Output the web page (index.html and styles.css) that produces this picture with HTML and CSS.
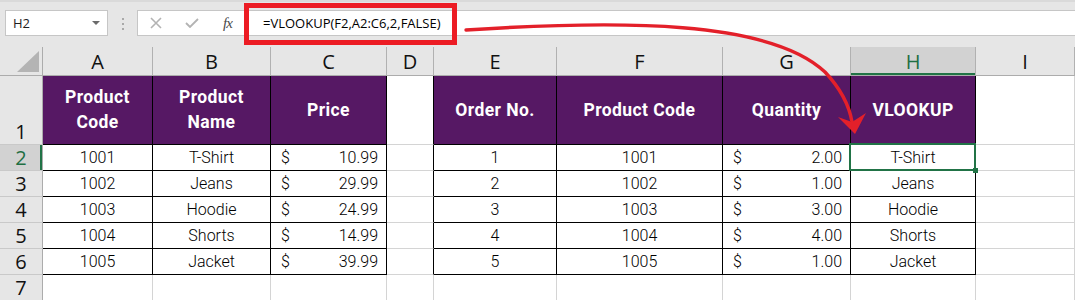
FILE: index.html
```html
<!DOCTYPE html>
<html lang="en">
<head>
<meta charset="utf-8">
<title>VLOOKUP example</title>
<link rel="stylesheet" href="styles.css">
</head>
<body>
<div class="app">
  <header class="toolbar">
    <div class="namebox">
      <span>H2</span>
      <svg class="caret" width="8" height="4" viewBox="0 0 8 4"><path d="M0 0H8L4 4Z" fill="#6b6b6b"/></svg>
    </div>
    <div class="grip"><i></i><i></i><i></i></div>
    <div class="fbar">
      <div class="fbtns">
        <svg class="ic-x" width="12" height="12" viewBox="0 0 12 12"><path d="M1 1L11 11M11 1L1 11" stroke="#b3b3b3" stroke-width="1.6" fill="none"/></svg>
        <svg class="ic-ok" width="14" height="10" viewBox="0 0 14 10"><path d="M1 5L5 9L13 1" stroke="#b3b3b3" stroke-width="1.8" fill="none"/></svg>
        <span class="fx">fx</span>
      </div>
      <div class="finput">=VLOOKUP(F2,A2:C6,2,FALSE)</div>
    </div>
  </header>

  <div class="sheet">
    <!-- column headers -->
    <div class="c corner"><span class="tri"></span></div>
    <div class="c ch">A</div>
    <div class="c ch">B</div>
    <div class="c ch">C</div>
    <div class="c ch">D</div>
    <div class="c ch">E</div>
    <div class="c ch">F</div>
    <div class="c ch">G</div>
    <div class="c ch sel-col">H</div>
    <div class="c ch">I</div>

    <!-- row 1 -->
    <div class="c rh r1">1</div>
    <div class="c hd">Product<br>Code</div>
    <div class="c hd">Product<br>Name</div>
    <div class="c hd">Price</div>
    <div class="c edge"></div>
    <div class="c hd">Order No.</div>
    <div class="c hd">Product Code</div>
    <div class="c hd">Quantity</div>
    <div class="c hd">VLOOKUP</div>
    <div class="c"></div>

    <!-- row 2 -->
    <div class="c rh sel-row">2</div>
    <div class="c d">1001</div>
    <div class="c d">T-Shirt</div>
    <div class="c d money"><span>$</span><span>10.99</span></div>
    <div class="c edge"></div>
    <div class="c d">1</div>
    <div class="c d">1001</div>
    <div class="c d money"><span>$</span><span>2.00</span></div>
    <div class="c d active">T-Shirt</div>
    <div class="c"></div>

    <!-- row 3 -->
    <div class="c rh">3</div>
    <div class="c d">1002</div>
    <div class="c d">Jeans</div>
    <div class="c d money"><span>$</span><span>29.99</span></div>
    <div class="c edge"></div>
    <div class="c d">2</div>
    <div class="c d">1002</div>
    <div class="c d money"><span>$</span><span>1.00</span></div>
    <div class="c d">Jeans</div>
    <div class="c"></div>

    <!-- row 4 -->
    <div class="c rh">4</div>
    <div class="c d">1003</div>
    <div class="c d">Hoodie</div>
    <div class="c d money"><span>$</span><span>24.99</span></div>
    <div class="c edge"></div>
    <div class="c d">3</div>
    <div class="c d">1003</div>
    <div class="c d money"><span>$</span><span>3.00</span></div>
    <div class="c d">Hoodie</div>
    <div class="c"></div>

    <!-- row 5 -->
    <div class="c rh">5</div>
    <div class="c d">1004</div>
    <div class="c d">Shorts</div>
    <div class="c d money"><span>$</span><span>14.99</span></div>
    <div class="c edge"></div>
    <div class="c d">4</div>
    <div class="c d">1004</div>
    <div class="c d money"><span>$</span><span>4.00</span></div>
    <div class="c d">Shorts</div>
    <div class="c"></div>

    <!-- row 6 -->
    <div class="c rh">6</div>
    <div class="c d">1005</div>
    <div class="c d">Jacket</div>
    <div class="c d money"><span>$</span><span>39.99</span></div>
    <div class="c edge"></div>
    <div class="c d">5</div>
    <div class="c d">1005</div>
    <div class="c d money"><span>$</span><span>1.00</span></div>
    <div class="c d">Jacket</div>
    <div class="c"></div>

    <!-- row 7 -->
    <div class="c rh">7</div>
    <div class="c"></div>
    <div class="c"></div>
    <div class="c"></div>
    <div class="c"></div>
    <div class="c"></div>
    <div class="c"></div>
    <div class="c"></div>
    <div class="c"></div>
    <div class="c"></div>
  </div>

  <div class="callout"></div>
  <svg class="arrow" width="1075" height="300" viewBox="0 0 1075 300">
    <path d="M466 30 C 620 20, 770 20, 825 72 C 840 88, 849 104, 852 122" fill="none" stroke="#e3202a" stroke-width="3.4" stroke-linecap="round"/>
    <polygon points="855,134 838,117 852,122 866,113" fill="#e3202a"/>
  </svg>
</div>
</body>
</html>
```

FILE: styles.css
```css
body {
  margin: 0;
  background: #ffffff;
}

.app {
  position: relative;
  width: 1075px;
  height: 300px;
  overflow: hidden;
  font-family: "Open Sans", "Noto Sans", sans-serif;
}

/* ---------- toolbar / formula bar ---------- */
.toolbar {
  height: 47px;
  box-sizing: border-box;
  background: #e6e6e6;
  border-top: 2px solid #dadada;
  display: flex;
  align-items: flex-start;
  padding: 8px 0 0 5px;
}

.namebox {
  width: 103px;
  height: 26px;
  box-sizing: border-box;
  background: #fff;
  border: 1px solid #c6c6c6;
  display: flex;
  align-items: center;
  justify-content: space-between;
  padding: 0 7px 0 7px;
  font-size: 13px;
  color: #1e1e1e;
}

.grip {
  display: flex;
  flex-direction: column;
  gap: 3px;
  margin: 8px 0 0 14px;
}

.grip i {
  display: block;
  width: 2px;
  height: 2px;
  background: #a9a9a9;
}

.fbar {
  flex: 1;
  height: 26px;
  margin-left: 13px;
  box-sizing: border-box;
  background: #fff;
  border: 1px solid #c6c6c6;
  border-right: 0;
  display: flex;
}

.fbtns {
  width: 108px;
  flex: none;
  display: flex;
  align-items: center;
}

.ic-x { margin-left: 12px; }
.ic-ok { margin-left: 23px; }

.fx {
  margin-left: 24px;
  font-family: "Liberation Serif", serif;
  font-style: italic;
  font-size: 15px;
  color: #4a4a4a;
  letter-spacing: -1px;
}

.finput {
  flex: 1;
  display: flex;
  align-items: center;
  padding-left: 16px;
  font-size: 13px;
  color: #000;
  border-left: 1px solid #d4d4d4;
}

/* ---------- sheet grid ---------- */
.sheet {
  display: grid;
  grid-template-columns: 43px 110px 118px 116px 47px 123px 166px 128px 125px 1fr;
  grid-template-rows: 29px 69px repeat(6, 26px);
  font-family: "Roboto", "Liberation Sans", sans-serif;
  font-weight: 300;
  font-size: 16px;
  color: #000;
}

.c {
  box-sizing: border-box;
  border-right: 1px solid #d4d4d4;
  border-bottom: 1px solid #d4d4d4;
  display: flex;
  align-items: center;
  justify-content: center;
  white-space: nowrap;
}

.corner {
  background: #e6e6e6;
  border-right-color: #acacac;
  border-bottom-color: #acacac;
  position: relative;
}

.tri {
  position: absolute;
  right: 3px;
  bottom: 3px;
  width: 0;
  height: 0;
  border-left: 22px solid transparent;
  border-bottom: 21px solid #b4b4b4;
}

.ch {
  background: #e6e6e6;
  border-right-color: #b1b1b1;
  border-bottom-color: #acacac;
  font-family: "Open Sans", sans-serif;
  font-weight: 400;
  font-size: 20px;
  color: #111;
}

.sel-col {
  background: #d2d2d2;
  color: #1f6f43;
  box-shadow: inset 0 -2px 0 #217346;
}

.rh {
  background: #e6e6e6;
  border-right-color: #acacac;
  border-bottom-color: #c9c9c9;
  font-family: "Open Sans", sans-serif;
  font-weight: 400;
  font-size: 20px;
  color: #111;
}

.r1 {
  align-items: flex-end;
  line-height: 24px;
}

.sel-row {
  background: #d2d2d2;
  color: #1f6f43;
  box-shadow: inset -2px 0 0 #217346;
}

.hd {
  background: #561864;
  color: #fff;
  font-family: "Roboto", sans-serif;
  font-weight: 700;
  font-size: 17.5px;
  letter-spacing: 0.4px;
  line-height: 25px;
  text-align: center;
  border-right-color: #000;
  border-bottom-color: #000;
}

.d {
  border-right-color: #000;
  border-bottom-color: #000;
}

.edge {
  border-right-color: #000;
}

.money {
  justify-content: space-between;
  padding: 0 8px 0 10px;
}

.active {
  position: relative;
}

.active::after {
  content: "";
  position: absolute;
  left: -2px;
  top: -2px;
  right: -1px;
  bottom: -1px;
  border: 2px solid #217346;
}

.active::before {
  content: "";
  position: absolute;
  right: -3px;
  bottom: -3px;
  width: 5px;
  height: 5px;
  background: #217346;
  z-index: 1;
}

/* ---------- overlays ---------- */
.callout {
  position: absolute;
  left: 244px;
  top: 3px;
  width: 213px;
  height: 42px;
  box-sizing: border-box;
  border: 5px solid #ec1c24;
}

.arrow {
  position: absolute;
  left: 0;
  top: 0;
  pointer-events: none;
}
```
